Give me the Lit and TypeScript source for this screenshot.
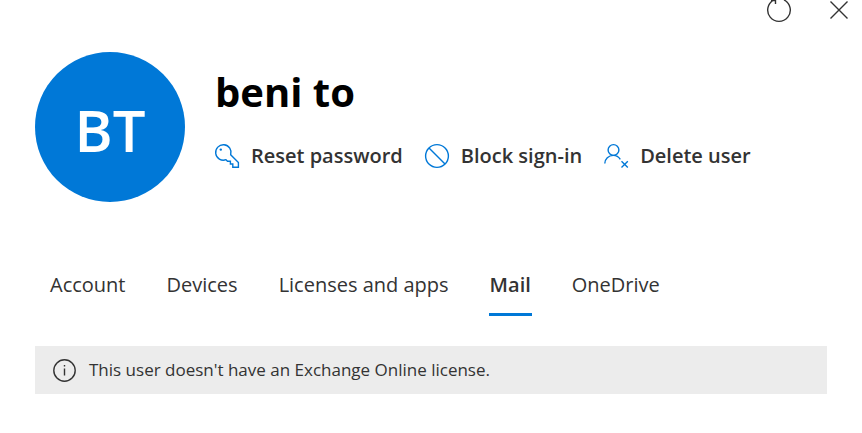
import { LitElement, html, css, svg } from "lit";
import { customElement, state } from "lit/decorators.js";
import { classMap } from "lit/directives/class-map.js";

const keyIcon = svg`
  <circle cx="5.8" cy="5.6" r="1.2" fill="currentColor" stroke="none" />
  <path d="M15.7 10.8A7.7 7.7 0 1 0 11 15.7L12.5 17.2H15.4V20H17.8V23.3H23.4V18.5Z" />`;

const blockIcon = svg`
  <circle cx="12" cy="12" r="11.4" />
  <path d="M4 4 20 20" />`;

const deleteUserIcon = svg`
  <circle cx="9.5" cy="6" r="5.4" />
  <path d="M.8 19.6C.8 15 4.6 11.4 9.3 11.4c3 0 5.4 1.4 7 4" />
  <path d="M17.5 17.3 23.8 23.5M23.8 17.3 17.5 23.5" />`;

@customElement("app-root")
export class AppRoot extends LitElement {
  static styles = css`
    :host {
      display: block;
      position: relative;
      background: #fff;
      color: #333;
      font-family: "Open Sans", "Noto Sans", sans-serif;
    }
    button {
      margin: 0;
      padding: 0;
      border: 0;
      background: none;
      color: inherit;
      font: inherit;
      cursor: pointer;
    }
    svg {
      display: block;
      flex: none;
      fill: none;
      stroke: currentColor;
      stroke-width: 1.4;
      overflow: visible;
    }
    .window-controls {
      position: absolute;
      top: -2px;
      right: 11px;
      display: flex;
      gap: 36px;
    }
    .panel {
      padding: 52px 35px 0;
    }
    .header {
      display: flex;
      gap: 30px;
    }
    .avatar {
      flex: none;
      display: flex;
      align-items: center;
      justify-content: center;
      width: 150px;
      height: 150px;
      border-radius: 50%;
      box-sizing: border-box;
      padding-top: 4px;
      background: #0078d7;
      color: #fff;
      font-size: 58px;
      font-weight: 600;
    }
    .name {
      margin: 10px 0 0;
      color: #000;
      font-size: 40px;
      line-height: 60px;
      font-weight: 700;
    }
    .actions {
      display: flex;
      gap: 22px;
      margin-top: 20px;
    }
    .action {
      display: flex;
      align-items: center;
      gap: 12px;
      font-size: 20px;
      line-height: 28px;
      font-weight: 600;
      white-space: nowrap;
    }
    .action svg {
      color: #0078d7;
    }
    .tabs {
      display: flex;
      gap: 39px;
      margin-top: 64px;
      padding: 0 14px;
    }
    .tab {
      height: 50px;
      padding: 0 1px 10px;
      border-bottom: 3px solid transparent;
      box-sizing: border-box;
      font-size: 20px;
      line-height: 37px;
      white-space: nowrap;
    }
    .tab.selected {
      border-color: #0078d7;
      font-weight: 600;
    }
    .notice {
      display: flex;
      align-items: center;
      gap: 13px;
      margin-top: 30px;
      padding: 10px 18px;
      background: #ececec;
      font-size: 17px;
      line-height: 28px;
    }
  `;

  @state() private selected = "Mail";

  private tabs = ["Account", "Devices", "Licenses and apps", "Mail", "OneDrive"];

  private actions = [
    { label: "Reset password", icon: keyIcon },
    { label: "Block sign-in", icon: blockIcon },
    { label: "Delete user", icon: deleteUserIcon },
  ];

  render() {
    return html`
      <div class="window-controls">
        <button aria-label="Refresh">
          <svg width="24" height="24" viewBox="0 0 24 24">
            <path d="M7 1.900A11.300 11.300 0 1 0 17 1.900M4 2.500H8.500V6" />
          </svg>
        </button>
        <button aria-label="Close">
          <svg width="24" height="24" viewBox="0 0 24 24">
            <path d="M3.500 3.500 20.500 20.500M20.500 3.500 3.500 20.500" />
          </svg>
        </button>
      </div>
      <main class="panel">
        <header class="header">
          <div class="avatar">BT</div>
          <div>
            <h1 class="name">beni to</h1>
            <div class="actions">
              ${this.actions.map(
                (a) => html`<button class="action">
                  <svg width="24" height="24" viewBox="0 0 24 24" aria-hidden="true">${a.icon}</svg>
                  <span>${a.label}</span>
                </button>`
              )}
            </div>
          </div>
        </header>
        <div class="tabs" role="tablist">
          ${this.tabs.map(
            (t) => html`<button
              role="tab"
              aria-selected=${t === this.selected}
              class=${classMap({ tab: true, selected: t === this.selected })}
              @click=${() => (this.selected = t)}
            >${t}</button>`
          )}
        </div>
        <div class="notice" role="status">
          <svg width="23" height="23" viewBox="0 0 23 23" aria-hidden="true">
            <circle cx="11.5" cy="11.5" r="10.7" />
            <path d="M11.5 9.5V16.5M11.5 6V7.6" />
          </svg>
          <span>This user doesn't have an Exchange Online license.</span>
        </div>
      </main>
    `;
  }
}
